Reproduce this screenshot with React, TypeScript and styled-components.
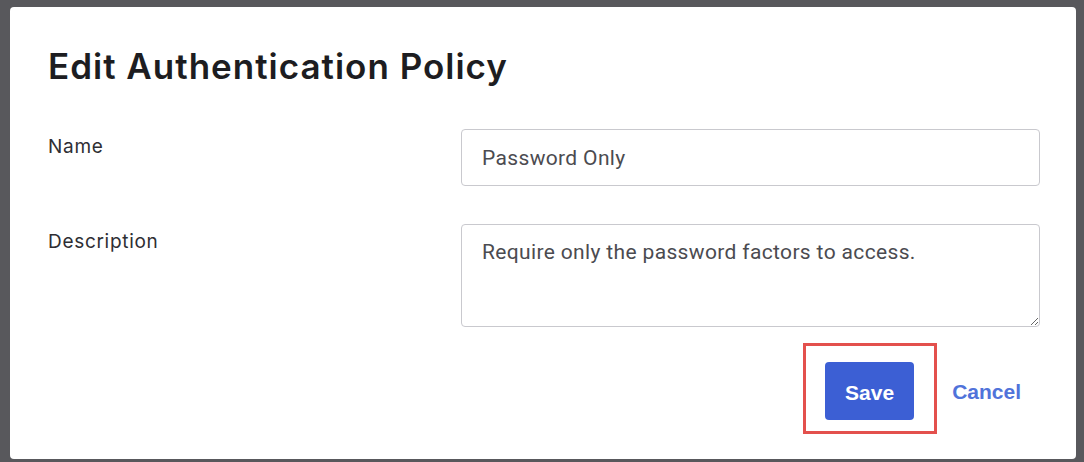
import React from "react";
import styled, { createGlobalStyle } from "styled-components";

const Global = createGlobalStyle`
  html, body { margin: 0; padding: 0; background: #58585c; }
  body { width: 1084px; height: 462px; overflow: hidden; font-family: Inter, "Noto Sans", sans-serif; }
`;

const Page = styled.div`
  width: 1084px;
  height: 462px;
  box-sizing: border-box;
  padding: 7px 8px 3px 10px;
  display: flex;
`;

const Modal = styled.div`
  flex: 1;
  background: #ffffff;
  border-radius: 4px;
  padding: 38px 36px 0 38px;
  box-sizing: border-box;
  display: flex;
  flex-direction: column;
`;

const Title = styled.h1`
  margin: 0;
  font-family: Inter, sans-serif;
  font-weight: 600;
  font-size: 35px;
  line-height: 42px;
  color: #1d1d21;
  letter-spacing: 1px;
`;

const Form = styled.div`
  margin-top: 42px;
  display: grid;
  grid-template-columns: 413px 1fr;
  row-gap: 38px;
`;

const Label = styled.label`
  font-family: Inter, sans-serif;
  font-size: 19px;
  line-height: 24px;
  color: #2e2e33;
  letter-spacing: 0.7px;
  padding-top: 6px;
`;

const fieldCss = `
  box-sizing: border-box;
  width: 100%;
  border: 1px solid #c9c9ce;
  border-radius: 4px;
  background: #fff;
  font-family: Roboto, sans-serif;
  font-size: 21px;
  letter-spacing: 0.35px;
  color: #4b4b50;
  padding: 0 20px;
  outline: none;
`;

const Input = styled.input`
  ${fieldCss}
  height: 57px;
`;

const TextArea = styled.textarea`
  ${fieldCss}
  height: 103px;
  padding-top: 14px;
  line-height: 26px;
  resize: vertical;
  display: block;
`;

const Actions = styled.div`
  margin-top: 16px;
  display: flex;
  justify-content: flex-end;
  align-items: center;
  gap: 15px;
  padding-right: 19px;
`;

const Highlight = styled.div`
  border: 3px solid #e3504d;
  padding: 16px 20px 11px 19px;
  display: flex;
`;

const SaveButton = styled.button`
  width: 89px;
  height: 58px;
  padding: 3px 0 0;
  border: none;
  border-radius: 4px;
  background: #3c5fd4;
  color: #fff;
  font-family: "Liberation Sans", Arial, sans-serif;
  font-weight: 700;
  font-size: 21px;
  cursor: pointer;
`;

const CancelLink = styled.button`
  border: none;
  background: none;
  padding: 6px 0 0;
  color: #5073da;
  font-family: "Liberation Sans", Arial, sans-serif;
  font-weight: 700;
  font-size: 21px;
  cursor: pointer;
`;

export default function App() {
  return (
    <>
      <Global />
      <Page>
        <Modal>
          <Title>Edit Authentication Policy</Title>
          <Form>
            <Label>Name</Label>
            <Input defaultValue="Password Only" />
            <Label>Description</Label>
            <TextArea defaultValue="Require only the password factors to access." />
          </Form>
          <Actions>
            <Highlight>
              <SaveButton>Save</SaveButton>
            </Highlight>
            <CancelLink>Cancel</CancelLink>
          </Actions>
        </Modal>
      </Page>
    </>
  );
}
